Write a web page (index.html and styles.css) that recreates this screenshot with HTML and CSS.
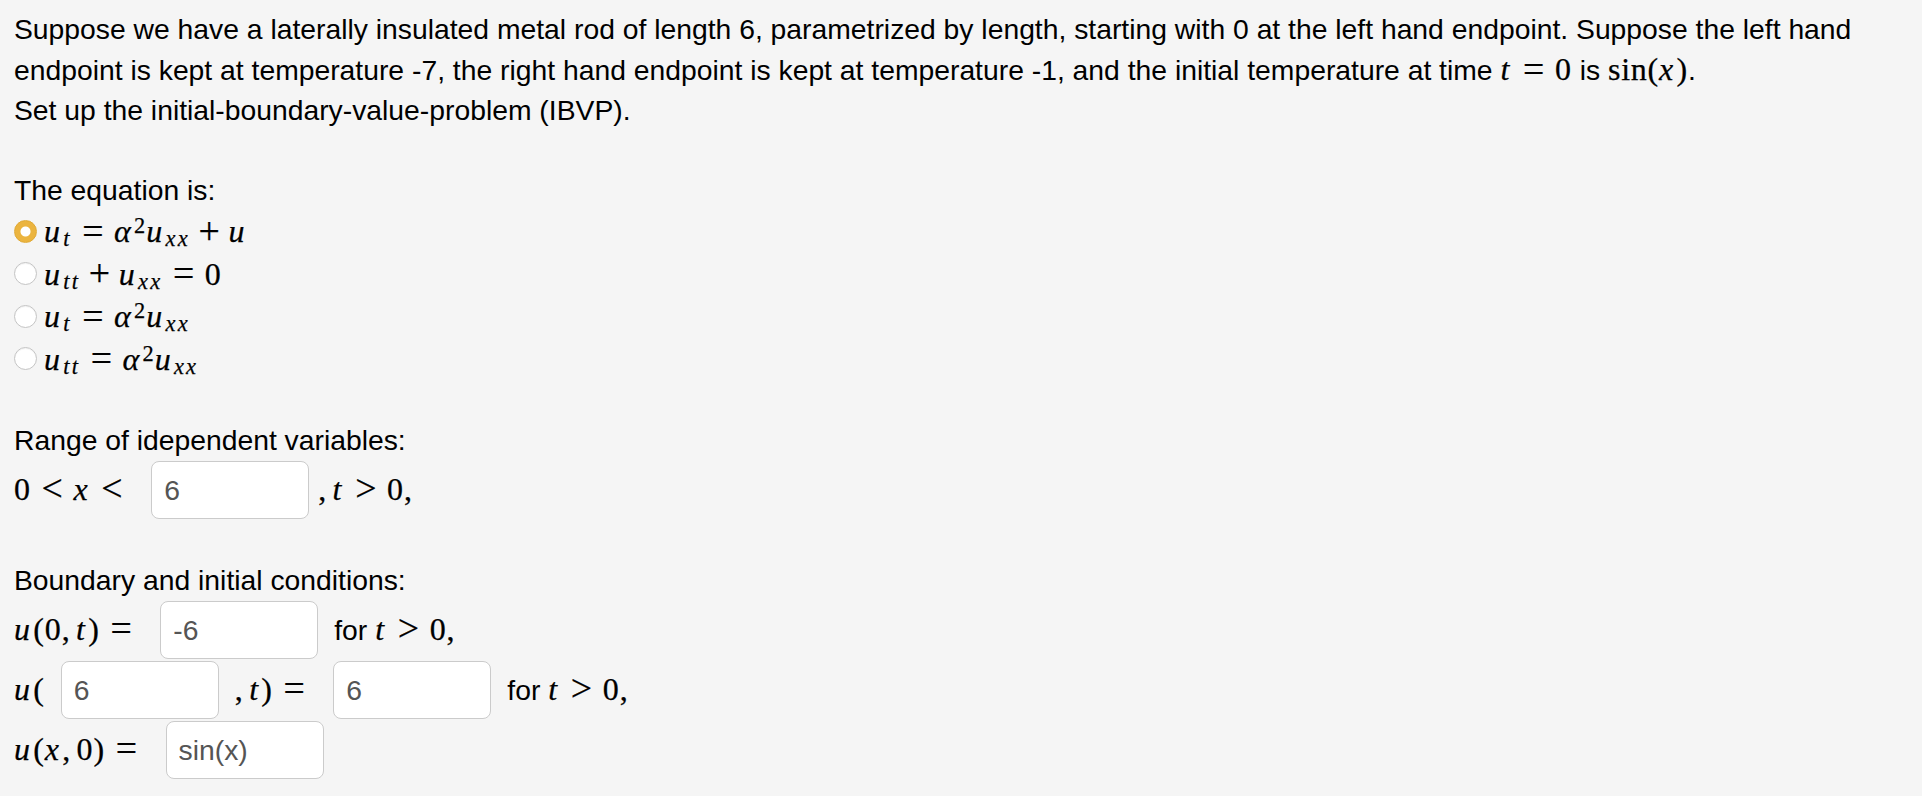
FILE: index.html
```html
<!DOCTYPE html>
<html lang="en">
<head>
<meta charset="utf-8">
<title>IBVP problem</title>
<link rel="stylesheet" href="styles.css">
</head>
<body>
<div class="problem">
  <p class="intro">Suppose we have a laterally insulated metal rod of length 6, parametrized by length, starting with 0 at the left hand endpoint. Suppose the left hand endpoint is kept at temperature -7, the right hand endpoint is kept at temperature -1, and the initial temperature at time <span class="m"><i>t</i><span class="rel">=</span>0</span> is <span class="m"><span class="fn">sin</span>(<i>x</i>)</span>.<br>Set up the initial-boundary-value-problem (IBVP).</p>

  <div class="section">
    <div class="label">The equation is:</div>
    <label class="choice"><input type="radio" name="eq" checked><span class="m"><i>u</i><sub><i>t</i></sub><span class="rel">=</span><i>α</i><sup>2</sup><i>u</i><sub><i>xx</i></sub><span class="bin">+</span><i>u</i></span></label>
    <label class="choice"><input type="radio" name="eq"><span class="m"><i>u</i><sub><i>tt</i></sub><span class="bin">+</span><i>u</i><sub><i>xx</i></sub><span class="rel">=</span>0</span></label>
    <label class="choice"><input type="radio" name="eq"><span class="m"><i>u</i><sub><i>t</i></sub><span class="rel">=</span><i>α</i><sup>2</sup><i>u</i><sub><i>xx</i></sub></span></label>
    <label class="choice"><input type="radio" name="eq"><span class="m"><i>u</i><sub><i>tt</i></sub><span class="rel">=</span><i>α</i><sup>2</sup><i>u</i><sub><i>xx</i></sub></span></label>
  </div>

  <div class="section">
    <div class="label">Range of idependent variables:</div>
    <div class="row">
      <span class="m">0<span class="rel">&lt;</span><i>x</i><span class="rel">&lt;</span></span>
      <input class="ans" type="text" value="6">
      <span class="m after-sm">,<span class="thin"></span><i>t</i><span class="rel">&gt;</span>0,</span>
    </div>
  </div>

  <div class="section">
    <div class="label">Boundary and initial conditions:</div>
    <div class="row">
      <span class="m"><i>u</i>(0,<span class="thin"></span><i>t</i>)<span class="rel">=</span></span>
      <input class="ans" type="text" value="-6">
      <span class="txt after">for <span class="m"><i>t</i><span class="rel">&gt;</span>0,</span></span>
    </div>
    <div class="row">
      <span class="m"><i>u</i>(</span>
      <input class="ans ans-tight" type="text" value="6">
      <span class="m after">,<span class="thin"></span><i>t</i>)<span class="rel">=</span></span>
      <input class="ans" type="text" value="6">
      <span class="txt after">for <span class="m"><i>t</i><span class="rel">&gt;</span>0,</span></span>
    </div>
    <div class="row">
      <span class="m"><i>u</i>(<i>x</i>,<span class="thin"></span>0)<span class="rel">=</span></span>
      <input class="ans" type="text" value="sin(x)">
    </div>
  </div>
</div>
</body>
</html>
```

FILE: styles.css
```css
html, body {
  margin: 0;
  padding: 0;
  background: #f5f5f5;
}

body {
  font-family: "Liberation Sans", Arial, sans-serif;
  font-size: 28.3px;
  line-height: 40px;
  color: #000;
}

.problem {
  padding: 9px 14px 0 14px;
}

.intro {
  margin: 0;
}

.section {
  margin-top: 40px;
}

.label {
  height: 40px;
}

/* math */
.m {
  font-family: "Liberation Serif", "Times New Roman", serif;
  font-size: 32px;
  letter-spacing: 0.03em;
  white-space: nowrap;
  -webkit-text-stroke: 0.25px #000;
}

.m i {
  font-style: italic;
  letter-spacing: 0.1em;
}

.m .fn {
  letter-spacing: 0.02em;
}

.m sub,
.m sup {
  font-size: 0.7em;
  line-height: 0;
}

.m sub {
  vertical-align: -0.2em;
}

.m sup {
  vertical-align: 0.42em;
}

.rel,
.bin {
  font-size: 1.18em;
  line-height: 0;
  letter-spacing: 0;
  vertical-align: -0.05em;
}

.rel {
  margin: 0 0.28em;
}

.bin {
  margin: 0 0.23em;
}

.thin {
  display: inline-block;
  width: 0.167em;
}

/* choices */
.choice {
  display: flex;
  align-items: center;
  height: 42.5px;
}

.choice input {
  appearance: none;
  -webkit-appearance: none;
  box-sizing: border-box;
  width: 23px;
  height: 23px;
  margin: 0 7px 0 0;
  flex: none;
  border-radius: 50%;
  border: 1px solid #c4c4c4;
  background: #fff;
  box-shadow: inset 0 1px 1px rgba(0, 0, 0, 0.05);
}

.choice input:checked {
  border-color: #e0a934;
  background: radial-gradient(circle, #fff 0 4.5px, #ebb43f 5.5px);
  box-shadow: none;
}

.choice .m {
  line-height: 42.5px;
}

/* answer rows */
.row {
  display: flex;
  align-items: baseline;
  height: 60px;
}

.ans {
  box-sizing: border-box;
  width: 158px;
  height: 58px;
  margin: 1px 7px 1px 18px;
  padding: 0 12px;
  border: 1px solid #cbcbcb;
  border-radius: 8px;
  background: #fff;
  font-family: "Liberation Sans", Arial, sans-serif;
  font-size: 28.3px;
  line-height: 56px;
  color: #555;
  outline: none;
}

.ans-tight {
  margin-left: 16px;
}

.after {
  margin-left: 9px;
}

.after-sm {
  margin-left: 2px;
}

.txt {
  white-space: nowrap;
}
```
